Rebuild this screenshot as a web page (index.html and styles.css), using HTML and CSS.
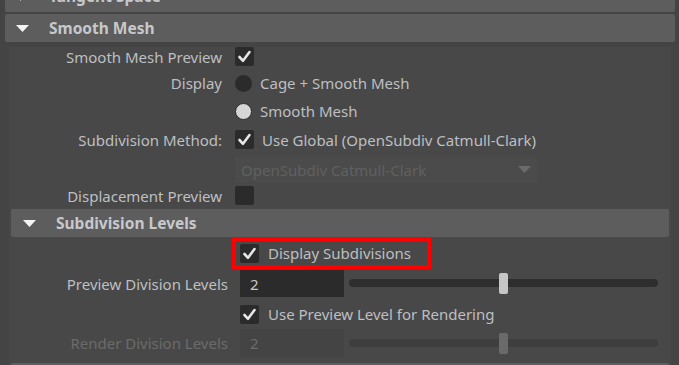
FILE: index.html
```html
<!DOCTYPE html>
<html>
<head>
<meta charset="utf-8">
<link rel="stylesheet" href="styles.css">
</head>
<body>
<div class="editor">
  <div class="hdr hdr-top">
    <svg class="tri-r" width="8" height="13" viewBox="0 0 8 13"><polygon points="0,0 7,6.5 0,13" fill="#f0f0f0"/></svg>
    <span class="hdr-title">Tangent Space</span>
  </div>
  <div class="hdr hdr-main">
    <svg class="tri" width="13" height="7" viewBox="0 0 13 7"><polygon points="0,0 13,0 6.5,7" fill="#f4f4f4"/></svg>
    <span class="hdr-title">Smooth Mesh</span>
  </div>
  <div class="panel">
    <div class="row r1">
      <div class="lbl">Smooth Mesh Preview</div>
      <span class="cb"><svg width="19" height="19" viewBox="0 0 19 19"><path d="M4.5 10 L8 13.8 L14.5 5" fill="none" stroke="#e6e6e6" stroke-width="2.6" stroke-linecap="round" stroke-linejoin="round"/></svg></span>
    </div>
    <div class="row r2">
      <div class="lbl">Display</div>
      <span class="radio"></span>
      <span class="txt">Cage + Smooth Mesh</span>
    </div>
    <div class="row r3">
      <div class="lbl"></div>
      <span class="radio on"></span>
      <span class="txt">Smooth Mesh</span>
    </div>
    <div class="row r4">
      <div class="lbl">Subdivision Method:</div>
      <span class="cb"><svg width="19" height="19" viewBox="0 0 19 19"><path d="M4.5 10 L8 13.8 L14.5 5" fill="none" stroke="#e6e6e6" stroke-width="2.6" stroke-linecap="round" stroke-linejoin="round"/></svg></span>
      <span class="txt">Use Global (OpenSubdiv Catmull-Clark)</span>
    </div>
    <div class="row r5">
      <div class="lbl"></div>
      <div class="dropdown">
        <span class="dd-text">OpenSubdiv Catmull-Clark</span>
        <svg width="13" height="7" viewBox="0 0 13 7"><polygon points="0,0 13,0 6.5,7" fill="#6b6b6b"/></svg>
      </div>
    </div>
    <div class="row r6">
      <div class="lbl">Displacement Preview</div>
      <span class="cb"></span>
    </div>

    <div class="hdr hdr-sub">
      <svg class="tri" width="13" height="7" viewBox="0 0 13 7"><polygon points="0,0 13,0 6.5,7" fill="#f4f4f4"/></svg>
      <span class="hdr-title">Subdivision Levels</span>
    </div>
    <div class="sub">
      <div class="row red-row">
        <div class="highlight">
          <span class="cb"><svg width="19" height="19" viewBox="0 0 19 19"><path d="M4.5 10 L8 13.8 L14.5 5" fill="none" stroke="#e6e6e6" stroke-width="2.6" stroke-linecap="round" stroke-linejoin="round"/></svg></span>
          <span class="txt">Display Subdivisions</span>
        </div>
      </div>
      <div class="row s-prev">
        <div class="lbl2">Preview Division Levels</div>
        <div class="field">2</div>
        <div class="slider">
          <div class="track"></div>
          <div class="handle" style="left: 150px"></div>
        </div>
      </div>
      <div class="row s-use">
        <div class="lbl2"></div>
        <span class="cb"><svg width="19" height="19" viewBox="0 0 19 19"><path d="M4.5 10 L8 13.8 L14.5 5" fill="none" stroke="#e6e6e6" stroke-width="2.6" stroke-linecap="round" stroke-linejoin="round"/></svg></span>
        <span class="txt">Use Preview Level for Rendering</span>
      </div>
      <div class="row s-render disabled">
        <div class="lbl2">Render Division Levels</div>
        <div class="field">2</div>
        <div class="slider">
          <div class="track"></div>
          <div class="handle" style="left: 150px"></div>
        </div>
      </div>
    </div>
    <div class="hdr hdr-next"></div>
  </div>
</div>
</body>
</html>
```
FILE: styles.css
```css
html, body {
  margin: 0;
  padding: 0;
  background: #444444;
  overflow: hidden;
  height: 365px;
}
body {
  font-family: "Noto Sans", "Open Sans", sans-serif;
  font-size: 15px;
  color: #bdbfc2;
}
.editor {
  width: 670px;
  padding-left: 5px;
}
.hdr {
  height: 28px;
  background: #5d5d5d;
  border-radius: 2px;
  display: flex;
  align-items: center;
  position: relative;
}
.hdr-title {
  font-weight: bold;
  font-size: 15.5px;
  color: #c6c8cb;
  margin-left: 20px;
  white-space: nowrap;
}
.tri { margin-left: 11px; }
.hdr-top { margin-top: -16px; }
.hdr-top .tri-r { margin-left: 15px; margin-top: -8px; }
.hdr-top .hdr-title { margin-left: 21px; margin-top: -4px; }
.hdr-main { margin-top: 2px; }
.panel {
  margin: 5px 4px 0 4px;
  padding: 0 2px;
  background: #484848;
  height: 318px;
  overflow: hidden;
}
.row {
  display: flex;
  align-items: center;
}
.lbl {
  width: 211px;
  text-align: right;
  margin-right: 13px;
  flex: none;
  white-space: nowrap;
}
.lbl2 {
  width: 217px;
  text-align: right;
  margin-right: 12px;
  flex: none;
  white-space: nowrap;
}
.cb {
  width: 19px;
  height: 19px;
  background: #2b2b2b;
  border-radius: 2px;
  flex: none;
  display: block;
}
.cb svg { display: block; }
.radio {
  width: 17px;
  height: 17px;
  border-radius: 50%;
  background: #2b2b2b;
  flex: none;
}
.radio.on {
  background: #d6d6d6;
  box-sizing: border-box;
  border: 1px solid #2b2b2b;
}
.txt { margin-left: 8px; white-space: nowrap; }
.r1 { height: 19px; }
.r2 { height: 18px; margin-top: 8px; }
.r3 { height: 18px; margin-top: 10px; }
.r4 { height: 19px; margin-top: 10px; }
.r5 { height: 25px; margin-top: 8px; }
.r6 { height: 19px; margin-top: 4px; }
.dropdown {
  width: 302px;
  height: 25px;
  background: #4b4b4b;
  display: flex;
  align-items: center;
  justify-content: space-between;
  padding: 0 6px 0 6px;
  box-sizing: border-box;
}
.dd-text { color: #606060; white-space: nowrap; }
.hdr-sub { margin-top: 4px; }
.hdr-sub .tri { margin-left: 12px; }
.red-row { height: 32px; padding-left: 221px; }
.highlight {
  height: 32px;
  width: 199px;
  box-sizing: border-box;
  border: 4px solid #ff0000;
  display: flex;
  align-items: center;
  padding-left: 4px;
}
.highlight .txt { margin-left: 9px; }
.s-prev { height: 27px; margin-top: 1px; }
.field {
  width: 104px;
  height: 27px;
  background: #2b2b2b;
  box-sizing: border-box;
  padding-left: 10px;
  display: flex;
  align-items: center;
  color: #c8c8c8;
  flex: none;
}
.slider {
  position: relative;
  width: 309px;
  height: 21px;
  margin-left: 5px;
}
.track {
  position: absolute;
  left: 0;
  right: 0;
  top: 6px;
  height: 8px;
  border-radius: 4px;
  background: #2e2e2e;
}
.handle {
  position: absolute;
  top: 0;
  width: 9px;
  height: 21px;
  border-radius: 2px;
  background: #c6c6c6;
}
.s-use { height: 18px; margin-top: 8px; }
.s-use .txt { margin-left: 9px; }
.s-render { height: 28px; margin-top: 6px; }
.disabled .lbl2 { color: #6b6b6b; }
.disabled .field { background: #444444; color: #6b6b6b; height: 28px; }
.disabled .track { background: #3e3e3e; }
.disabled .handle { background: #6a6a6a; }
.hdr-next { margin-top: 6px; }
```
